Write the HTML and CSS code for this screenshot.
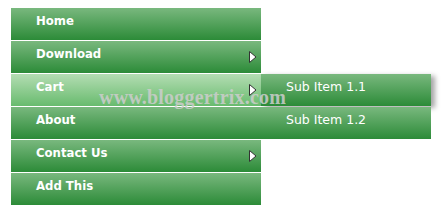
FILE: index.html
```html
<!DOCTYPE html>
<html lang="en">

<head>
    <meta charset="UTF-8">
    <title>Drop Menu</title>
    <link rel="stylesheet" href="styles.css">
</head>

<body>
    <ul class="menu">
        <li><a href="#">Home</a></li>
        <li class="has_sub"><a href="#">Download</a></li>
        <li class="has_sub active">
            <a href="#">Cart</a>
            <ul class="sub_menu">
                <li class="first"><a href="#">Sub Item 1.1</a></li>
                <li><a href="#">Sub Item 1.2</a></li>
            </ul>
        </li>
        <li><a href="#">About</a></li>
        <li class="has_sub"><a href="#">Contact Us</a></li>
        <li><a href="#">Add This</a></li>
    </ul>

    <div class="watermark">www.bloggertrix.com</div>
</body>

</html>
```

FILE: styles.css
```css
body {
    margin: 0;
    padding: 8px 0 0 11px;
    background: #fff;
    position: relative;
}

.menu {
    list-style: none;
    margin: 0;
    padding: 0;
    width: 250px;
}

.menu li {
    position: relative;
    margin-bottom: 1px;
}

.menu a {
    display: block;
    height: 27px;
    padding: 5px 0 0 25px;
    font-family: "DejaVu Sans Condensed", "DejaVu Sans", sans-serif;
    font-weight: bold;
    font-size: 13px;
    line-height: 16px;
    color: #fff;
    text-decoration: none;
    background: linear-gradient(to bottom, #79b87e, #2c8b38);
}

/* little white arrow for items with a sub menu */
.has_sub > a {
    background-image: url("data:image/svg+xml;utf8,<svg xmlns='http://www.w3.org/2000/svg' width='8' height='12'><path d='M0.5 0.5 L7 6 L0.5 11.5 Z' fill='white' stroke='%23333' stroke-width='1'/></svg>"),
        linear-gradient(to bottom, #79b87e, #2c8b38);
    background-repeat: no-repeat;
    background-position: 238px 10px, 0 0;
}

.has_sub.active > a {
    background-image: url("data:image/svg+xml;utf8,<svg xmlns='http://www.w3.org/2000/svg' width='8' height='12'><path d='M0.5 0.5 L7 6 L0.5 11.5 Z' fill='white' stroke='%23333' stroke-width='1'/></svg>"),
        linear-gradient(to bottom, #b4ddb3, #68bb6e);
}

.sub_menu {
    list-style: none;
    margin: 0;
    padding: 0;
    position: absolute;
    left: 250px;
    top: 0;
    width: 170px;
}

.sub_menu a {
    font-family: "DejaVu Sans", sans-serif;
    font-weight: normal;
    font-size: 12.5px;
    padding: 5px 0 0 25px;
    height: 27px;
}

.sub_menu .first a {
    box-shadow: 4px 2px 5px rgba(0, 0, 0, 0.35);
}

.watermark {
    position: absolute;
    left: 99px;
    top: 86px;
    font-family: "Liberation Serif", serif;
    font-weight: bold;
    font-size: 20px;
    color: rgba(205, 205, 205, 0.85);
    letter-spacing: 0.2px;
}
```
